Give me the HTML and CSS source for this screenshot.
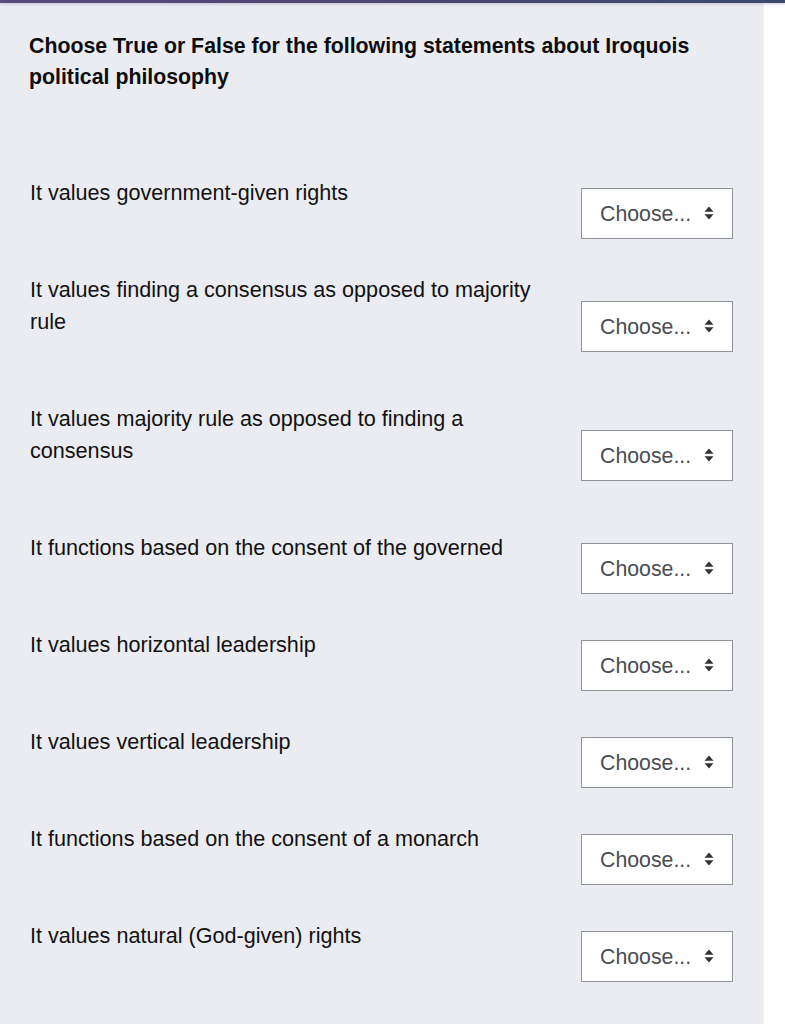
FILE: index.html
```html
<!DOCTYPE html>
<html lang="en">
<head>
<meta charset="utf-8">
<title>Iroquois political philosophy</title>
<link rel="stylesheet" href="styles.css">
</head>
<body>
<div class="topbar"></div>
<div class="page">
  <main class="panel">
    <h1 class="title">Choose True or False for the following statements about Iroquois political philosophy</h1>
    <div class="rows">
      <div class="row">
        <p class="stmt">It values government-given rights</p>
        <div class="choose"><span>Choose...</span><svg class="arr" width="10" height="14" viewBox="0 0 10 14"><path d="M5 0.5 L9.5 5.8 H0.5 Z M5 13.5 L9.5 8.2 H0.5 Z" fill="#333"/></svg></div>
      </div>
      <div class="row">
        <p class="stmt">It values finding a consensus as opposed to majority rule</p>
        <div class="choose"><span>Choose...</span><svg class="arr" width="10" height="14" viewBox="0 0 10 14"><path d="M5 0.5 L9.5 5.8 H0.5 Z M5 13.5 L9.5 8.2 H0.5 Z" fill="#333"/></svg></div>
      </div>
      <div class="row">
        <p class="stmt">It values majority rule as opposed to finding a consensus</p>
        <div class="choose"><span>Choose...</span><svg class="arr" width="10" height="14" viewBox="0 0 10 14"><path d="M5 0.5 L9.5 5.8 H0.5 Z M5 13.5 L9.5 8.2 H0.5 Z" fill="#333"/></svg></div>
      </div>
      <div class="row">
        <p class="stmt">It functions based on the consent of the governed</p>
        <div class="choose"><span>Choose...</span><svg class="arr" width="10" height="14" viewBox="0 0 10 14"><path d="M5 0.5 L9.5 5.8 H0.5 Z M5 13.5 L9.5 8.2 H0.5 Z" fill="#333"/></svg></div>
      </div>
      <div class="row">
        <p class="stmt">It values horizontal leadership</p>
        <div class="choose"><span>Choose...</span><svg class="arr" width="10" height="14" viewBox="0 0 10 14"><path d="M5 0.5 L9.5 5.8 H0.5 Z M5 13.5 L9.5 8.2 H0.5 Z" fill="#333"/></svg></div>
      </div>
      <div class="row">
        <p class="stmt">It values vertical leadership</p>
        <div class="choose"><span>Choose...</span><svg class="arr" width="10" height="14" viewBox="0 0 10 14"><path d="M5 0.5 L9.5 5.8 H0.5 Z M5 13.5 L9.5 8.2 H0.5 Z" fill="#333"/></svg></div>
      </div>
      <div class="row">
        <p class="stmt">It functions based on the consent of a monarch</p>
        <div class="choose"><span>Choose...</span><svg class="arr" width="10" height="14" viewBox="0 0 10 14"><path d="M5 0.5 L9.5 5.8 H0.5 Z M5 13.5 L9.5 8.2 H0.5 Z" fill="#333"/></svg></div>
      </div>
      <div class="row">
        <p class="stmt">It values natural (God-given) rights</p>
        <div class="choose"><span>Choose...</span><svg class="arr" width="10" height="14" viewBox="0 0 10 14"><path d="M5 0.5 L9.5 5.8 H0.5 Z M5 13.5 L9.5 8.2 H0.5 Z" fill="#333"/></svg></div>
      </div>
    </div>
  </main>
  <div class="side"></div>
</div>
</body>
</html>
```
FILE: styles.css
```css
html, body {
  margin: 0;
  padding: 0;
  background: #ffffff;
}
body {
  font-family: "Liberation Sans", Arial, Helvetica, sans-serif;
  color: #111111;
  height: 1024px;
  overflow: hidden;
}
.topbar {
  height: 3px;
  background: linear-gradient(90deg, #574a7c 0%, #4d4574 50%, #3c4a6c 100%);
  box-shadow: 0 1px 3px rgba(40, 40, 70, 0.25);
  position: relative;
  z-index: 1;
}
.page {
  display: flex;
  height: 1021px;
}
.panel {
  width: 763px;
  box-sizing: border-box;
  background: #ebecf1;
  padding: 28px 30px 0 29px;
}
.side {
  flex: 1;
  background: #ffffff;
  border-left: 1px solid #f1f2f5;
}
.title {
  margin: 0;
  font-size: 21.3px;
  line-height: 31px;
  font-weight: 700;
  color: #0d0d0d;
  max-width: 690px;
}
.rows {
  display: flex;
  flex-direction: column;
  gap: 25px;
  margin-top: 84px;
}
.row {
  display: flex;
  align-items: center;
  justify-content: space-between;
}
.stmt {
  margin: 0 0 40px 1px;
  width: 520px;
  font-size: 21.6px;
  line-height: 32px;
  color: #111111;
}
.choose {
  width: 152px;
  height: 51px;
  box-sizing: border-box;
  background: #ffffff;
  border: 1px solid #8f939a;
  display: flex;
  align-items: center;
  padding: 2px 0 0 18px;
  gap: 13px;
  font-size: 21.3px;
  color: #4a4d52;
}
.arr {
  display: block;
  width: 10px;
  height: 14px;
  margin-top: -2px;
}
```
